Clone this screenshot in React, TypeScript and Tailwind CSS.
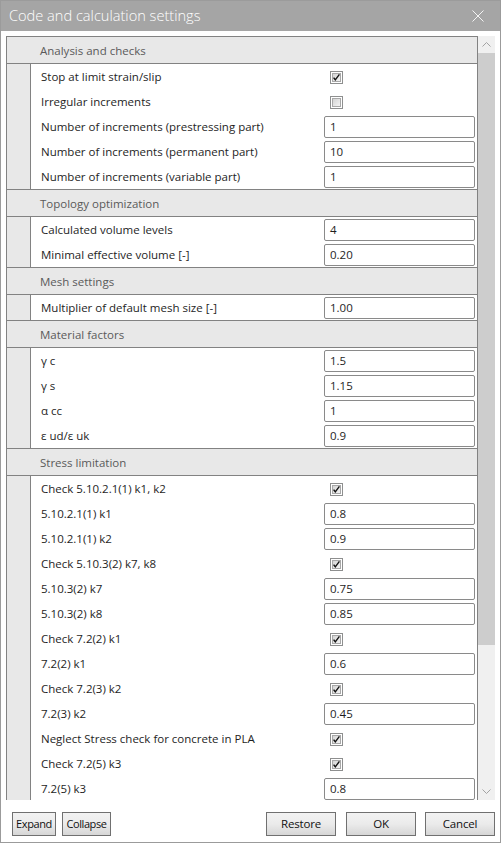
import React from 'react';

type Row = { label: string; value?: string; checked?: boolean };
type Section = { title: string; rows: Row[] };

const sections: Section[] = [
  {
    title: 'Analysis and checks',
    rows: [
      { label: 'Stop at limit strain/slip', checked: true },
      { label: 'Irregular increments', checked: false },
      { label: 'Number of increments (prestressing part)', value: '1' },
      { label: 'Number of increments (permanent part)', value: '10' },
      { label: 'Number of increments (variable part)', value: '1' },
    ],
  },
  {
    title: 'Topology optimization',
    rows: [
      { label: 'Calculated volume levels', value: '4' },
      { label: 'Minimal effective volume [-]', value: '0.20' },
    ],
  },
  {
    title: 'Mesh settings',
    rows: [{ label: 'Multiplier of default mesh size [-]', value: '1.00' }],
  },
  {
    title: 'Material factors',
    rows: [
      { label: 'γ c', value: '1.5' },
      { label: 'γ s', value: '1.15' },
      { label: 'α cc', value: '1' },
      { label: 'ε ud/ε uk', value: '0.9' },
    ],
  },
  {
    title: 'Stress limitation',
    rows: [
      { label: 'Check 5.10.2.1(1) k1, k2', checked: true },
      { label: '5.10.2.1(1) k1', value: '0.8' },
      { label: '5.10.2.1(1) k2', value: '0.9' },
      { label: 'Check 5.10.3(2) k7, k8', checked: true },
      { label: '5.10.3(2) k7', value: '0.75' },
      { label: '5.10.3(2) k8', value: '0.85' },
      { label: 'Check 7.2(2) k1', checked: true },
      { label: '7.2(2) k1', value: '0.6' },
      { label: 'Check 7.2(3) k2', checked: true },
      { label: '7.2(3) k2', value: '0.45' },
      { label: 'Neglect Stress check for concrete in PLA', checked: true },
      { label: 'Check 7.2(5) k3', checked: true },
      { label: '7.2(5) k3', value: '0.8' },
      { label: 'Check 7.2(6) k4', checked: true },
    ],
  },
];

const CheckBox = ({ checked }: { checked: boolean }) => (
  <svg width="13" height="13" viewBox="0 0 13 13" className="block">
    <defs>
      <linearGradient id="cbg" x1="0" y1="0" x2="1" y2="1">
        <stop offset="0" stopColor="#d2d2d2" />
        <stop offset="1" stopColor="#f6f6f6" />
      </linearGradient>
    </defs>
    <rect x="0.5" y="0.5" width="12" height="12" fill="#fff" stroke="#8e8f8f" />
    <rect x="2.5" y="2.5" width="8" height="8" fill="url(#cbg)" stroke="#a8a8a8" />
    {checked && <path d="M3.6 6.6 L5.3 8.8 L9.4 3.4" fill="none" stroke="#111" strokeWidth="1.4" />}
  </svg>
);

const PropRow = ({ row }: { row: Row }) => (
  <div className="flex h-[25px] shrink-0">
    <div className="w-[24px] shrink-0 bg-[#e8e8e8] border-r border-[#828282]" />
    <div className="flex-1 flex items-center pl-[10px] pt-[1px] text-[#1e1e1e] whitespace-nowrap">{row.label}</div>
    <div className="w-[153px] shrink-0 flex items-center pr-[2px]">
      {row.value !== undefined ? (
        <div className="w-[151px] h-[22px] border border-[#8a8a8a] rounded-[2px] bg-white flex items-center pl-[5px] pt-[1px] text-[#1e1e1e]">
          {row.value}
        </div>
      ) : (
        <div className="pl-[6px] pt-[1px]">
          <CheckBox checked={!!row.checked} />
        </div>
      )}
    </div>
  </div>
);

const SectionHeader = ({ title }: { title: string }) => (
  <div className="h-[28px] shrink-0 bg-[#e8e8e8] border-t border-b border-[#828282] flex items-center pl-[33px] pt-[1px] text-[#5a5a5a]">
    {title}
  </div>
);

const Button = ({ label, w, small }: { label: string; w: string; small?: boolean }) => (
  <button
    className={`${w} h-[24px] border border-[#707070] bg-gradient-to-b from-[#f2f2f2] via-[#ebebeb] to-[#d6d6d6] ${
      small ? 'text-[11px] tracking-[-0.4px]' : 'text-[11.5px] tracking-[-0.2px]'
    } text-[#111] flex items-center justify-center whitespace-nowrap`}
  >
    {label}
  </button>
);

export default function App() {
  return (
    <div
      className="w-[501px] h-[843px] bg-white border border-[#9b9b9b] flex flex-col text-[11.5px]"
      style={{ fontFamily: '"Segoe UI", "Open Sans", "Noto Sans", sans-serif' }}
    >
      <div className="h-[30px] shrink-0 bg-[#a5a5a5] flex items-center justify-between pl-[8px] pr-[16px]">
        <span className="text-white text-[14.6px] font-light">Code and calculation settings</span>
        <svg width="12" height="12" viewBox="0 0 12 12">
          <path d="M0.5 0.5 L11.5 11.5 M11.5 0.5 L0.5 11.5" stroke="#f4f4f4" strokeWidth="1" />
        </svg>
      </div>

      <div className="mt-[5px] ml-[5px] w-[489px] h-[764px] flex shrink-0">
        <div className="w-[472px] h-full border-l border-r border-[#828282] overflow-hidden flex flex-col">
          {sections.map((s) => (
            <React.Fragment key={s.title}>
              <SectionHeader title={s.title} />
              {s.rows.map((r) => (
                <PropRow key={r.label} row={r} />
              ))}
            </React.Fragment>
          ))}
        </div>
        <div className="w-[17px] h-full flex flex-col bg-[#f0f0f0]">
          <div className="h-[17px] shrink-0 flex items-center justify-center">
            <svg width="9" height="5" viewBox="0 0 9 5">
              <path d="M0.5 4.5 L4.5 0.5 L8.5 4.5" fill="none" stroke="#a3a3a3" />
            </svg>
          </div>
          <div className="h-[592px] shrink-0 bg-[#cdcdcd]" />
          <div className="flex-1" />
          <div className="h-[17px] shrink-0 flex items-center justify-center">
            <svg width="9" height="5" viewBox="0 0 9 5">
              <path d="M0.5 0.5 L4.5 4.5 L8.5 0.5" fill="none" stroke="#a3a3a3" />
            </svg>
          </div>
        </div>
      </div>

      <div className="mt-[12px] flex items-center pl-[11px] pr-[5px]">
        <Button label="Expand" w="w-[44px]" small />
        <div className="w-[6px]" />
        <Button label="Collapse" w="w-[49px]" small />
        <div className="flex-1" />
        <Button label="Restore" w="w-[70px]" />
        <div className="w-[10px]" />
        <Button label="OK" w="w-[70px]" />
        <div className="w-[9px]" />
        <Button label="Cancel" w="w-[70px]" />
      </div>
    </div>
  );
}
